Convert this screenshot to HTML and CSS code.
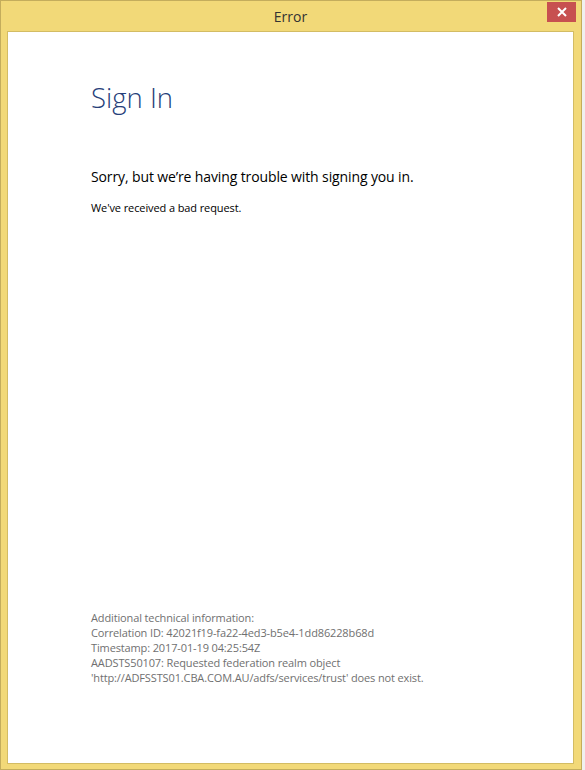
FILE: index.html
```
<!DOCTYPE html>
<html>
<head>
<meta charset="utf-8">
<link rel="stylesheet" href="styles.css">
</head>
<body>
<div class="window">
  <div class="titlebar">
    <div class="title">Error</div>
    <div class="close" aria-label="Close">
      <svg width="12" height="10" viewBox="0 0 12 10"><path d="M2 1 L10 9 M10 1 L2 9" stroke="#fff" stroke-width="2" fill="none"/></svg>
    </div>
  </div>
  <div class="content">
    <div class="main">
      <h1 class="heading">Sign In</h1>
      <p class="lead">Sorry, but we’re having trouble with signing you in.</p>
      <p class="detail">We've received a bad request.</p>
    </div>
    <div class="tech">
      <div>Additional technical information:</div>
      <div>Correlation ID: 42021f19-fa22-4ed3-b5e4-1dd86228b68d</div>
      <div>Timestamp: 2017-01-19 04:25:54Z</div>
      <div>AADSTS50107: Requested federation realm object</div>
      <div>'http://ADFSSTS01.CBA.COM.AU/adfs/services/trust' does not exist.</div>
    </div>
  </div>
</div>
</body>
</html>
```
FILE: styles.css
```
html, body {
  margin: 0;
  padding: 0;
  background: #f0f0f0;
}
body {
  width: 585px;
  height: 770px;
  overflow: hidden;
  font-family: "Open Sans", "Noto Sans", sans-serif;
}
.window {
  box-sizing: border-box;
  width: 582px;
  height: 770px;
  background: #f2d978;
  border: 1px solid #c4ad5c;
  padding: 0 7px 5px 6px;
  display: flex;
  flex-direction: column;
}
.titlebar {
  height: 30px;
  flex: none;
  position: relative;
  display: flex;
  justify-content: center;
  align-items: center;
}
.title {
  font-size: 14px;
  color: #333;
  margin-top: 0;
}
.close {
  position: absolute;
  right: -2px;
  top: 1px;
  width: 29px;
  height: 20px;
  background: #c75050;
  display: flex;
  align-items: center;
  justify-content: center;
}
.content {
  flex: 1;
  background: #fff;
  border: 1px solid #d3bc64;
  display: flex;
  flex-direction: column;
  justify-content: space-between;
  padding: 0 0 78px 83px;
}
.heading {
  margin: 47px 0 0 0;
  font-weight: 300;
  font-size: 27.5px;
  line-height: 38px;
  color: #263f7a;
}
.lead {
  margin: 50px 0 0 0;
  font-size: 14px;
  line-height: 20px;
  letter-spacing: -0.12px;
  color: #000;
}
.detail {
  margin: 13px 0 0 0;
  font-size: 11px;
  line-height: 16px;
  letter-spacing: -0.1px;
  color: #000;
}
.tech {
  font-size: 11px;
  line-height: 15px;
  letter-spacing: -0.13px;
  color: #707070;
}
```
